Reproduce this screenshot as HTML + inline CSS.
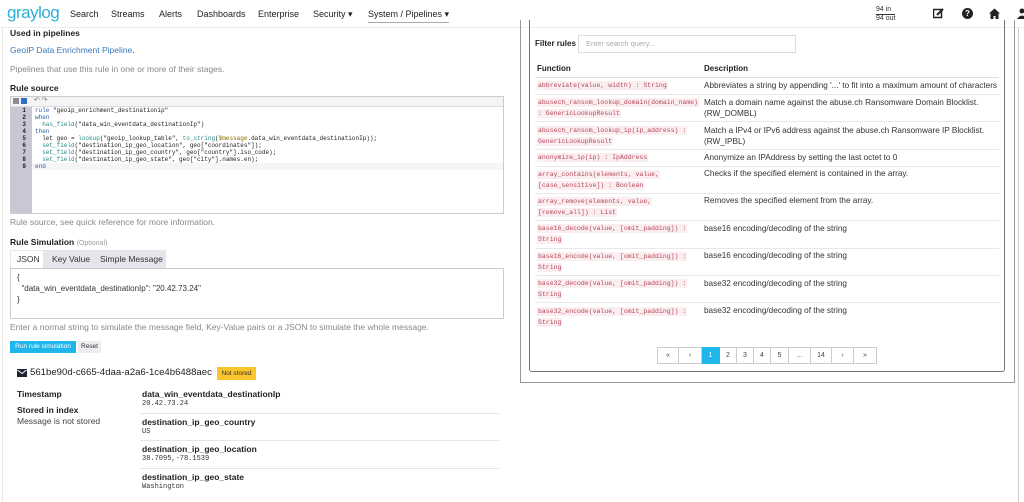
<!DOCTYPE html>
<html><head><meta charset="utf-8"><style>
*{box-sizing:border-box;margin:0;padding:0}
body{width:1024px;height:502px;overflow:hidden;background:#fff;font-family:"Liberation Sans",sans-serif;color:#1f1f1f;position:relative;font-size:8.5px}
.a{position:absolute;white-space:nowrap}
.nav{position:absolute;left:0;top:0;width:1024px;height:28px;border-bottom:1px solid #eee;background:#fff}
.nav .i{position:absolute;top:9px;font-size:9px;color:#222}
.b{font-weight:bold}
.g{color:#888}
.code{position:absolute;left:35px;top:106.5px;font-family:"Liberation Mono",monospace;font-size:6px;line-height:7px;color:#222;white-space:pre}
.ln{position:absolute;left:10px;top:106.5px;width:22px;text-align:right;padding-right:6px;font-family:"Liberation Mono",monospace;font-size:6px;line-height:7px;font-weight:bold;color:#222;white-space:pre}
.k{color:#2a5fa8}.f{color:#2a8a8a}.v{color:#8a6d00}
.fn{position:absolute;left:537px;font-family:"Liberation Mono",monospace;font-size:6.5px;line-height:11px;color:#b5485a;white-space:pre}
.fn span{background:#fbeef0;padding:1px 1px}
.ds{position:absolute;left:704px;font-size:8.2px;line-height:11px;color:#333;white-space:pre}
.hr{position:absolute;left:535px;width:464px;height:1px;background:#e8e8e8}
.pg{position:absolute;top:347px;height:17px;border:1px solid #ccc;border-left:none;font-size:7px;color:#444;text-align:center;line-height:15px;background:#fff}
.fv{position:absolute;left:142px;font-family:"Liberation Mono",monospace;font-size:7px;color:#333}
.fk{position:absolute;left:142px;font-weight:bold;font-size:8.5px}
.lhr{position:absolute;left:140px;width:359px;height:1px;background:#e5e5e5}
</style></head><body>
<div class="nav">
<div class="a" style="left:7px;top:3px;font-size:17px;color:#2eb0d6;letter-spacing:-0.5px">graylog</div>
<div class="i" style="left:70px">Search</div>
<div class="i" style="left:111px">Streams</div>
<div class="i" style="left:159px">Alerts</div>
<div class="i" style="left:197px">Dashboards</div>
<div class="i" style="left:258px">Enterprise</div>
<div class="i" style="left:313px">Security ▾</div>
<div class="i" style="left:368px;border-bottom:1px solid #aaa;padding-bottom:2px">System / Pipelines ▾</div>
<div class="a" style="left:876px;top:6px;font-size:7px;line-height:8px;color:#333"><div style="border-bottom:1px solid #333">94 in</div>94 out</div>
<svg class="a" style="left:933px;top:8px" width="11" height="11" viewBox="0 0 11 11"><rect x="0.5" y="1.5" width="8" height="8" fill="none" stroke="#222" stroke-width="1.5"/><path d="M4 7 L10 1" stroke="#222" stroke-width="2"/></svg>
<div class="a" style="left:962px;top:8px;width:11px;height:11px;border-radius:50%;background:#222;color:#fff;font-size:8px;font-weight:bold;text-align:center;line-height:11px">?</div>
<svg class="a" style="left:989px;top:8px" width="11" height="11" viewBox="0 0 11 11"><path d="M5.5 0.5 L11 5.5 H9.5 V11 H6.5 V8 H4.5 V11 H1.5 V5.5 H0 Z" fill="#222"/></svg>
<svg class="a" style="left:1017px;top:8px" width="8" height="11" viewBox="0 0 8 11"><circle cx="5" cy="3" r="2.5" fill="#222"/><path d="M0 11 Q5 4 10 11Z" fill="#222"/></svg>
</div>
<div class="a" style="left:2px;top:28px;width:1px;height:474px;background:#e6e6e6"></div>
<div class="a b" style="left:10px;top:28px;font-size:8.5px">Used in pipelines</div>
<div class="a" style="left:10px;top:45px;color:#3b79b8">GeoIP Data Enrichment Pipeline<span style="color:#333">.</span></div>
<div class="a g" style="left:10px;top:64px">Pipelines that use this rule in one or more of their stages.</div>
<div class="a b" style="left:10px;top:83px">Rule source</div>
<div class="a" style="left:10px;top:96px;width:494px;height:118px;border:1px solid #ccc;background:#fff"></div>
<div class="a" style="left:11px;top:97px;width:492px;height:10px;background:#f4f4f4;border-bottom:1px solid #ddd"></div>
<div class="a" style="left:13px;top:98px;width:6px;height:6px;background:#8a8a9a"></div>
<div class="a" style="left:21px;top:98px;width:6px;height:6px;background:#2f6ec8"></div>
<div class="a" style="left:34px;top:96px;font-size:7px;color:#777">↶ ↷</div>
<div class="a" style="left:11px;top:107px;width:21px;height:106px;background:#c8c8d4"></div>
<div class="a" style="left:32px;top:163px;width:471px;height:7px;background:#f5f5f5"></div>
<div class="ln">1
2
3
4
5
6
7
8
9</div>
<div class="code"><span class="k">rule</span> "geoip_enrichment_destinationip"
<span class="k">when</span>
  <span class="f">has_field</span>("data_win_eventdata_destinationIp")
<span class="k">then</span>
  let geo = <span class="f">lookup</span>("geoip_lookup_table", <span class="f">to_string</span>(<span class="v">$message</span>.data_win_eventdata_destinationIp));
  <span class="f">set_field</span>("destination_ip_geo_location", geo["coordinates"]);
  <span class="f">set_field</span>("destination_ip_geo_country", geo["country"].iso_code);
  <span class="f">set_field</span>("destination_ip_geo_state", geo["city"].names.en);
<span class="k">end</span></div>
<div class="a g" style="left:10px;top:217px">Rule source, see quick reference for more information.</div>
<div class="a b" style="left:10px;top:237px">Rule Simulation <span style="font-weight:normal;color:#999;font-size:7px">(Optional)</span></div>
<div class="a" style="left:44px;top:250px;width:122px;height:18px;background:#e4e6ec"></div>
<div class="a" style="left:10px;top:250px;width:34px;height:19px;background:#fff;border:1px solid #e4e6ec;border-bottom:none"></div>
<div class="a" style="left:17px;top:254px;color:#333">JSON</div>
<div class="a" style="left:52px;top:254px;color:#333">Key Value</div>
<div class="a" style="left:100px;top:254px;color:#333">Simple Message</div>
<div class="a" style="left:10px;top:268px;width:494px;height:51px;border:1px solid #ccc"></div>
<div class="a" style="left:17px;top:272px;line-height:11px;font-size:8px;color:#333">{<br>&nbsp;&nbsp;"data_win_eventdata_destinationIp": "20.42.73.24"<br>}</div>
<div class="a g" style="left:10px;top:322px">Enter a normal string to simulate the message field, Key-Value pairs or a JSON to simulate the whole message.</div>
<div class="a" style="left:10px;top:341px;width:66px;height:12px;background:#1fb6ec;color:#fff;font-size:6.5px;line-height:12px;text-align:center">Run rule simulation</div>
<div class="a" style="left:78px;top:341px;width:23px;height:12px;background:#eceef2;color:#333;font-size:6.5px;line-height:12px;text-align:center">Reset</div>
<svg class="a" style="left:17px;top:369px" width="10" height="8" viewBox="0 0 10 8"><rect width="10" height="8" fill="#1f2430"/><path d="M0.5 1 L5 4.5 L9.5 1" stroke="#fff" stroke-width="1" fill="none"/></svg>
<div class="a" style="left:30px;top:367px;font-size:9.6px;color:#222">561be90d-c665-4daa-a2a6-1ce4b6488aec</div>
<div class="a" style="left:217px;top:367px;width:39px;height:13px;background:#fbc52b;font-size:6.5px;line-height:13px;text-align:center;color:#333">Not stored</div>
<div class="a b" style="left:17px;top:389px">Timestamp</div>
<div class="a b" style="left:17px;top:405px">Stored in index</div>
<div class="a" style="left:17px;top:416px;color:#444">Message is not stored</div>
<div class="fk" style="top:389px">data_win_eventdata_destinationIp</div>
<div class="fv" style="top:400px">20.42.73.24</div>
<div class="lhr" style="top:413px"></div>
<div class="fk" style="top:417px">destination_ip_geo_country</div>
<div class="fv" style="top:428px">US</div>
<div class="lhr" style="top:440px"></div>
<div class="fk" style="top:444px">destination_ip_geo_location</div>
<div class="fv" style="top:455px">38.7095,-78.1539</div>
<div class="lhr" style="top:468px"></div>
<div class="fk" style="top:472px">destination_ip_geo_state</div>
<div class="fv" style="top:483px">Washington</div>

<div class="a" style="left:520px;top:20px;width:495px;height:363px;border:1px solid #999;border-top:none"></div>
<div class="a" style="left:529px;top:20px;width:476px;height:352px;border:1px solid #777;border-top:none;border-radius:0 0 3px 3px"></div>
<div class="a" style="left:1018px;top:28px;width:1px;height:474px;background:#ccc"></div>
<div class="a b" style="left:535px;top:39px;font-size:8px">Filter rules</div>
<div class="a" style="left:578px;top:35px;width:218px;height:18px;border:1px solid #ddd;font-size:7.5px;color:#aaa;line-height:16px;padding-left:7px">Enter search query...</div>
<div class="a b" style="left:537px;top:64px;font-size:8px">Function</div>
<div class="a b" style="left:704px;top:64px;font-size:8px">Description</div>
<div class="hr" style="top:77px;background:#ddd"></div>
<div class="fn" style="top:80px"><span>abbreviate(value, width) : String</span></div>
<div class="ds" style="top:80px">Abbreviates a string by appending '...' to fit into a maximum amount of characters</div>
<div class="hr" style="top:94px"></div>
<div class="fn" style="top:97px"><span>abusech_ransom_lookup_domain(domain_name)</span>
<span>: GenericLookupResult</span></div>
<div class="ds" style="top:97px">Match a domain name against the abuse.ch Ransomware Domain Blocklist.
(RW_DOMBL)</div>
<div class="hr" style="top:121px"></div>
<div class="fn" style="top:125px"><span>abusech_ransom_lookup_ip(ip_address) :</span>
<span>GenericLookupResult</span></div>
<div class="ds" style="top:125px">Match a IPv4 or IPv6 address against the abuse.ch Ransomware IP Blocklist.
(RW_IPBL)</div>
<div class="hr" style="top:149px"></div>
<div class="fn" style="top:152px"><span>anonymize_ip(ip) : IpAddress</span></div>
<div class="ds" style="top:152px">Anonymize an IPAddress by setting the last octet to 0</div>
<div class="hr" style="top:166px"></div>
<div class="fn" style="top:169px"><span>array_contains(elements, value,</span>
<span>[case_sensitive]) : Boolean</span></div>
<div class="ds" style="top:168px">Checks if the specified element is contained in the array.</div>
<div class="hr" style="top:193px"></div>
<div class="fn" style="top:196px"><span>array_remove(elements, value,</span>
<span>[remove_all]) : List</span></div>
<div class="ds" style="top:195px">Removes the specified element from the array.</div>
<div class="hr" style="top:220px"></div>
<div class="fn" style="top:223px"><span>base16_decode(value, [omit_padding]) :</span>
<span>String</span></div>
<div class="ds" style="top:223px">base16 encoding/decoding of the string</div>
<div class="hr" style="top:248px"></div>
<div class="fn" style="top:251px"><span>base16_encode(value, [omit_padding]) :</span>
<span>String</span></div>
<div class="ds" style="top:250px">base16 encoding/decoding of the string</div>
<div class="hr" style="top:275px"></div>
<div class="fn" style="top:278px"><span>base32_decode(value, [omit_padding]) :</span>
<span>String</span></div>
<div class="ds" style="top:278px">base32 encoding/decoding of the string</div>
<div class="hr" style="top:302px"></div>
<div class="fn" style="top:306px"><span>base32_encode(value, [omit_padding]) :</span>
<span>String</span></div>
<div class="ds" style="top:305px">base32 encoding/decoding of the string</div>

<div class="pg" style="left:657px;width:22px;border-left:1px solid #ccc">«</div>
<div class="pg" style="left:679px;width:23px">‹</div>
<div class="pg" style="left:702px;width:18px;background:#1fb6ec;color:#fff;border-color:#1fb6ec">1</div>
<div class="pg" style="left:720px;width:17px">2</div>
<div class="pg" style="left:737px;width:17px">3</div>
<div class="pg" style="left:754px;width:17px">4</div>
<div class="pg" style="left:771px;width:18px">5</div>
<div class="pg" style="left:789px;width:22px">…</div>
<div class="pg" style="left:811px;width:21px">14</div>
<div class="pg" style="left:832px;width:22px">›</div>
<div class="pg" style="left:854px;width:23px">»</div>
</body></html>
